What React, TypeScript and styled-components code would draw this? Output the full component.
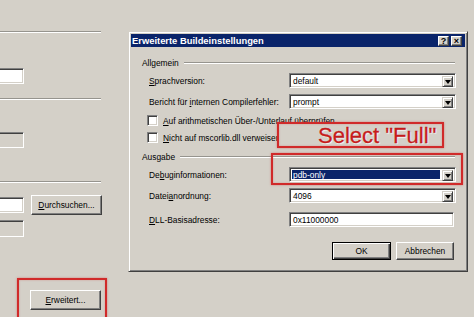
import React from 'react';
import styled, { createGlobalStyle } from 'styled-components';

const Global = createGlobalStyle`
  html, body { margin: 0; padding: 0; background: #d4d0c8; }
  body { font-family: "Liberation Sans", Arial, sans-serif; }
`;

const Screen = styled.div`
  position: relative;
  width: 474px;
  height: 317px;
  overflow: hidden;
  background: #d4d0c8;
  display: flex;
  align-items: flex-start;
  font-family: "Liberation Sans", Arial, sans-serif;
  font-size: 8.4px;
  line-height: 10px;
  color: #000;
`;

const LeftPane = styled.div`
  width: 128px;
  flex: none;
  display: flex;
  flex-direction: column;
  align-items: flex-start;
`;

const Etched = styled.div<{ $top: number }>`
  margin-top: ${p => p.$top}px;
  width: 101px;
  height: 0;
  border-top: 1px solid #96948e;
  border-bottom: 1px solid #ffffff;
`;

const Field = styled.div<{ $top?: number; $disabled?: boolean; $h?: number }>`
  margin-top: ${p => p.$top ?? 0}px;
  margin-left: -16px;
  width: 40px;
  height: ${p => p.$h ?? 16}px;
  box-sizing: border-box;
  background: ${p => (p.$disabled ? '#d4d0c8' : '#ffffff')};
  border: 1px solid;
  border-color: #808080 #ffffff #ffffff #808080;
  box-shadow: inset 1px 1px #404040, inset -1px -1px #d4d0c8;
`;

const BrowseRow = styled.div`
  margin-top: 12px;
  display: flex;
  align-items: center;
  gap: 7px;
`;

const WinButton = styled.button<{ $w: number; $h?: number; $default?: boolean; $ml?: number; $top?: number }>`
  width: ${p => p.$w}px;
  height: ${p => p.$h ?? 20}px;
  margin-left: ${p => p.$ml ?? 0}px;
  margin-top: ${p => p.$top ?? 0}px;
  box-sizing: border-box;
  padding: 0;
  background: #d4d0c8;
  font-family: "Liberation Sans", Arial, sans-serif;
  font-size: 8.4px;
  color: #000;
  display: flex;
  align-items: center;
  justify-content: center;
  border: 1px solid;
  border-color: ${p => (p.$default ? '#000 #000 #000 #000' : '#ffffff #404040 #404040 #ffffff')};
  box-shadow: ${p =>
    p.$default
      ? 'inset 1px 1px #ffffff, inset -1px -1px #404040, inset -2px -2px #808080'
      : 'inset -1px -1px #808080'};
`;

const U = styled.span`
  text-decoration: underline;
  text-underline-offset: 1px;
`;

const Dialog = styled.div`
  margin-top: 31px;
  width: 340px;
  height: 241px;
  flex: none;
  box-sizing: border-box;
  background: #d4d0c8;
  border: 1px solid;
  border-color: #d4d0c8 #404040 #404040 #d4d0c8;
  box-shadow: inset 1px 1px #ffffff, inset -1px -1px #808080;
  padding: 2px;
  display: flex;
  flex-direction: column;
`;

const TitleBar = styled.div`
  height: 13px;
  background: #0a246a;
  display: flex;
  align-items: center;
  padding: 0 3px 0 1px;
  gap: 2px;
`;

const TitleText = styled.span`
  flex: 1;
  color: #fff;
  font-weight: bold;
  font-size: 9.4px;
  line-height: 13px;
  white-space: nowrap;
`;

const CaptionButton = styled.span`
  width: 11px;
  height: 10px;
  box-sizing: border-box;
  background: #d4d0c8;
  border: 1px solid;
  border-color: #ffffff #404040 #404040 #ffffff;
  box-shadow: inset -1px -1px #808080;
  display: flex;
  align-items: center;
  justify-content: center;
  font-weight: bold;
  font-size: 9px;
  line-height: 8px;
  color: #000;
`;

const Body = styled.div`
  padding: 0 11px 0 11px;
  display: flex;
  flex-direction: column;
`;

const GroupHeader = styled.div<{ $top: number }>`
  margin-top: ${p => p.$top}px;
  height: 10px;
  display: flex;
  align-items: center;
  gap: 5px;
  margin-right: -1px;
`;

const GroupLine = styled.div`
  flex: 1;
  height: 0;
  border-top: 1px solid #96948e;
  border-bottom: 1px solid #ffffff;
`;

const FormRow = styled.div<{ $top: number }>`
  margin-top: ${p => p.$top}px;
  padding-left: 7px;
  display: grid;
  grid-template-columns: 140px 167px;
  align-items: center;
`;

const Label = styled.span`
  white-space: nowrap;
`;

const Combo = styled.div`
  width: 167px;
  height: 15px;
  box-sizing: border-box;
  background: #fff;
  border: 1px solid;
  border-color: #808080 #ffffff #ffffff #808080;
  box-shadow: inset 1px 1px #404040, inset -1px -1px #d4d0c8;
  padding: 2px;
  display: flex;
  gap: 2px;
`;

const TextBox = styled(Combo)`
  width: 165px;
`;

const ComboText = styled.span<{ $selected?: boolean }>`
  flex: 1;
  padding-left: 1px;
  line-height: 11px;
  white-space: nowrap;
  background: ${p => (p.$selected ? '#0a246a' : 'transparent')};
  color: ${p => (p.$selected ? '#ffffff' : '#000000')};
`;

const DropButton = styled.span`
  width: 11px;
  height: 11px;
  box-sizing: border-box;
  background: #d4d0c8;
  border: 1px solid;
  border-color: #d4d0c8 #404040 #404040 #d4d0c8;
  box-shadow: inset 1px 1px #ffffff, inset -1px -1px #808080;
  display: flex;
  align-items: center;
  justify-content: center;
`;

const Arrow = styled.span`
  width: 0;
  height: 0;
  border-left: 3.5px solid transparent;
  border-right: 3.5px solid transparent;
  border-top: 4px solid #000;
`;

const CheckRow = styled.div<{ $top: number }>`
  margin-top: ${p => p.$top}px;
  padding-left: 5px;
  height: 13px;
  display: flex;
  align-items: center;
  gap: 5px;
`;

const CheckBox = styled.span`
  width: 11px;
  height: 11px;
  box-sizing: border-box;
  background: #fff;
  border: 1px solid;
  border-color: #808080 #ffffff #ffffff #808080;
  box-shadow: inset 1px 1px #404040, inset -1px -1px #d4d0c8;
`;

const ButtonRow = styled.div`
  margin-top: 15px;
  display: flex;
  justify-content: flex-end;
  gap: 5px;
`;

const Callout = styled.div<{ $x: number; $y: number; $w: number; $h: number; $fill?: boolean }>`
  position: absolute;
  left: ${p => p.$x}px;
  top: ${p => p.$y}px;
  width: ${p => p.$w}px;
  height: ${p => p.$h}px;
  box-sizing: border-box;
  border: 2px solid #d02a2a;
  box-shadow: 0 0 2px rgba(210, 60, 60, 0.55), inset 0 0 2px rgba(210, 60, 60, 0.4);
  background: ${p => (p.$fill ? '#d4d0c8' : 'transparent')};
  padding: 1px 0 0 39px;
`;

const CalloutText = styled.span`
  font-family: "Liberation Sans", Arial, sans-serif;
  font-size: 22px;
  line-height: 22px;
  color: #cc1c1c;
  white-space: nowrap;
  -webkit-text-stroke: 0.3px #b01515;
  text-shadow: 0 0 1px #fff, 1px 1px 1px rgba(255, 255, 255, 0.8);
`;

export default function App() {
  return (
    <Screen>
      <Global />
      <LeftPane>
        <Etched $top={31} />
        <Field $top={35} />
        <Etched $top={14} />
        <Field $top={32} $disabled />
        <Etched $top={33} />
        <BrowseRow>
          <Field />
          <WinButton $w={71}>
            <span><U>D</U>urchsuchen...</span>
          </WinButton>
        </BrowseRow>
        <Field $top={5} $h={17} $disabled />
        <WinButton $w={71} $ml={30} $top={53}>
          <span><U>E</U>rweitert...</span>
        </WinButton>
      </LeftPane>

      <Dialog>
        <TitleBar>
          <TitleText>Erweiterte Buildeinstellungen</TitleText>
          <CaptionButton>?</CaptionButton>
          <CaptionButton>×</CaptionButton>
        </TitleBar>
        <Body>
          <GroupHeader $top={11}>
            <Label>Allgemein</Label>
            <GroupLine />
          </GroupHeader>
          <FormRow $top={5}>
            <Label><U>S</U>prachversion:</Label>
            <Combo>
              <ComboText>default</ComboText>
              <DropButton><Arrow /></DropButton>
            </Combo>
          </FormRow>
          <FormRow $top={6}>
            <Label>Bericht für <U>i</U>nternen Compilerfehler:</Label>
            <Combo>
              <ComboText>prompt</ComboText>
              <DropButton><Arrow /></DropButton>
            </Combo>
          </FormRow>
          <CheckRow $top={5}>
            <CheckBox />
            <Label><U>A</U>uf arithmetischen Über-/Unterlauf überprüfen</Label>
          </CheckRow>
          <CheckRow $top={4}>
            <CheckBox />
            <Label><U>N</U>icht auf mscorlib.dll verweisen</Label>
          </CheckRow>
          <GroupHeader $top={8}>
            <Label>Ausgabe</Label>
            <GroupLine />
          </GroupHeader>
          <FormRow $top={5}>
            <Label>De<U>b</U>uginformationen:</Label>
            <Combo>
              <ComboText $selected>pdb-only</ComboText>
              <DropButton><Arrow /></DropButton>
            </Combo>
          </FormRow>
          <FormRow $top={6}>
            <Label>Datei<U>a</U>nordnung:</Label>
            <Combo>
              <ComboText>4096</ComboText>
              <DropButton><Arrow /></DropButton>
            </Combo>
          </FormRow>
          <FormRow $top={9}>
            <Label><U>D</U>LL-Basisadresse:</Label>
            <TextBox>
              <ComboText>0x11000000</ComboText>
            </TextBox>
          </FormRow>
          <ButtonRow>
            <WinButton $w={59} $h={18} $default>OK</WinButton>
            <WinButton $w={58} $h={18}>Abbrechen</WinButton>
          </ButtonRow>
        </Body>
      </Dialog>

      <Callout $x={277} $y={122} $w={167} $h={26} $fill>
        <CalloutText>Select "Full"</CalloutText>
      </Callout>
      <Callout $x={271} $y={153} $w={192} $h={32} />
      <Callout $x={17} $y={278} $w={90} $h={45} />
    </Screen>
  );
}
